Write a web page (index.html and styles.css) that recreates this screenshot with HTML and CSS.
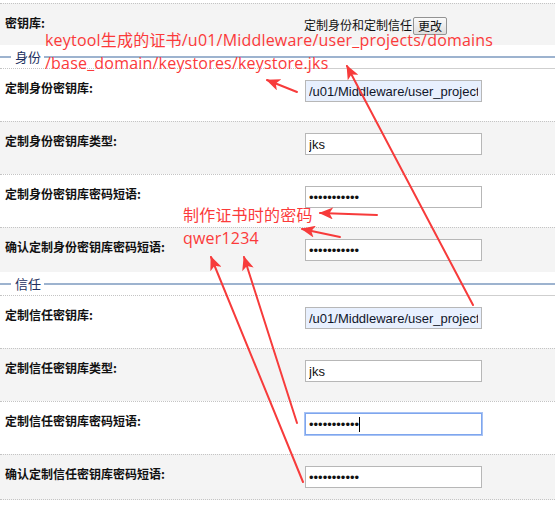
FILE: index.html
```html
<!DOCTYPE html>
<html lang="zh-CN">
<head>
<meta charset="utf-8">
<title>密钥库</title>
<link rel="stylesheet" href="styles.css">
</head>
<body>
<div class="page">
  <div class="row row-top">
    <div class="cell label">密钥库:</div>
    <div class="cell value top-value"><span class="plain">定制身份和定制信任</span><button class="btn" type="button">更改</button></div>
  </div>

  <section class="group">
    <div class="legend"><span>身份</span></div>
    <div class="row first">
      <div class="cell label">定制身份密钥库:</div>
      <div class="cell value"><input class="field filled" type="text" value="/u01/Middleware/user_projects/domains/base_domain/keystores/keystore.jks"></div>
    </div>
    <div class="row alt">
      <div class="cell label">定制身份密钥库类型:</div>
      <div class="cell value"><input class="field" type="text" value="jks"></div>
    </div>
    <div class="row">
      <div class="cell label">定制身份密钥库密码短语:</div>
      <div class="cell value"><input class="field" type="password" value="qwer1234abc"></div>
    </div>
    <div class="row alt last">
      <div class="cell label">确认定制身份密钥库密码短语:</div>
      <div class="cell value"><input class="field" type="password" value="qwer1234abc"></div>
    </div>
  </section>

  <section class="group">
    <div class="legend"><span>信任</span></div>
    <div class="row first">
      <div class="cell label">定制信任密钥库:</div>
      <div class="cell value"><input class="field filled" type="text" value="/u01/Middleware/user_projects/domains/base_domain/keystores/keystore.jks"></div>
    </div>
    <div class="row alt">
      <div class="cell label">定制信任密钥库类型:</div>
      <div class="cell value"><input class="field" type="text" value="jks"></div>
    </div>
    <div class="row">
      <div class="cell label">定制信任密钥库密码短语:</div>
      <div class="cell value"><div class="focus-wrap"><input class="field focused" type="password" value="qwer1234abc"><span class="caret"></span></div></div>
    </div>
    <div class="row alt last bottom">
      <div class="cell label">确认定制信任密钥库密码短语:</div>
      <div class="cell value"><input class="field" type="password" value="qwer1234abc"></div>
    </div>
  </section>

  <div class="note note-path">keytool生成的证书/u01/Middleware/user_projects/domains<br>/base_domain/keystores/keystore.jks</div>
  <div class="note note-pass">制作证书时的密码<br>qwer1234</div>

  <svg class="arrows" width="555" height="506" viewBox="0 0 555 506" aria-hidden="true">
    <defs>
      <marker id="head" viewBox="0 0 14 12" refX="13" refY="6" markerWidth="14" markerHeight="12" markerUnits="userSpaceOnUse" orient="auto">
        <path d="M0,0 L14,6 L0,12 L3.5,6 Z" fill="#f73b3b"/>
      </marker>
    </defs>
    <g stroke="#f73b3b" stroke-width="2" stroke-linecap="round" fill="none">
      <line x1="473" y1="305" x2="347" y2="66" marker-end="url(#head)"/>
      <line x1="297" y1="92" x2="267" y2="80" marker-end="url(#head)"/>
      <line x1="377" y1="215" x2="320" y2="213" marker-end="url(#head)"/>
      <line x1="340" y1="237" x2="302" y2="229" marker-end="url(#head)"/>
      <line x1="303" y1="482" x2="211" y2="257" marker-end="url(#head)"/>
      <line x1="297" y1="423" x2="244" y2="257" marker-end="url(#head)"/>
    </g>
  </svg>
</div>
</body>
</html>
```
FILE: styles.css
```css
html, body {
  margin: 0;
  padding: 0;
  background: #ffffff;
}

body {
  font-family: "Noto Sans CJK SC", "Liberation Sans", sans-serif;
  font-size: 12px;
  color: #111111;
}

.page {
  position: relative;
  width: 555px;
  height: 506px;
  padding-top: 3px;
  box-sizing: border-box;
  overflow: hidden;
}

.row {
  display: grid;
  grid-template-columns: 300px 1fr;
}

.row.alt {
  background: #f4f4f4;
}

.cell {
  border-top: 1px dotted #c4c4c4;
  padding: 11px 0 19px 0;
}

.row.last .cell {
  padding-bottom: 11px;
}

.row.bottom .cell {
  border-bottom: 1px dotted #c4c4c4;
}

.row.first .value {
  border-top-style: solid;
  border-top-color: #cfcfcf;
}

.label {
  padding-left: 5px;
  font-weight: bold;
  line-height: 16px;
  white-space: nowrap;
}

.value {
  padding-left: 5px;
  height: 22px;
}

.row-top {
  background: #f4f4f4;
}

.row-top .cell {
  padding-top: 11px;
  padding-bottom: 0;
  height: 30px;
}

.top-value {
  display: flex;
  align-items: flex-start;
  padding-left: 4px;
}

.top-value .plain {
  line-height: 16px;
  margin-top: 2px;
  font-weight: normal;
}

.btn {
  margin: 2px 0 0 1px;
  height: 18px;
  width: 34px;
  padding: 0;
  font-family: "Noto Sans CJK SC", sans-serif;
  font-size: 12px;
  line-height: 14px;
  color: #111;
  border: 1px solid #939393;
  border-radius: 2px;
  background: linear-gradient(#fafafa, #dedede);
}

.legend {
  display: flex;
  align-items: center;
  height: 14px;
  margin: 5px 0 4px;
}

.legend::before,
.legend::after {
  content: "";
  height: 2px;
  background: #9db3cf;
}

.legend::before {
  width: 11px;
}

.legend::after {
  flex: 1;
}

.legend span {
  padding: 0 3px 0 4px;
  font-size: 13px;
  line-height: 14px;
  color: #1b2f5e;
}

.field {
  box-sizing: border-box;
  width: 177px;
  height: 22px;
  margin: 0;
  padding: 0 3px;
  border: 1px solid #b7b7b7;
  border-radius: 0;
  background: #ffffff;
  font-family: "Liberation Sans", Arial, sans-serif;
  font-size: 13px;
  color: #111;
  outline: none;
}

.field.filled {
  background: #e8f0fe;
  color: #10162a;
}

.focus-wrap {
  position: relative;
  width: 177px;
  height: 22px;
}

.field.focused {
  border: 1px solid #7ea6ee;
  box-shadow: 0 0 0 1px #a8c3f4;
}

.caret {
  position: absolute;
  left: 54px;
  top: 4px;
  width: 1px;
  height: 15px;
  background: #000;
}

.note {
  position: absolute;
  font-family: "Open Sans", "Noto Sans CJK SC", sans-serif;
  font-size: 16px;
  letter-spacing: 0.2px;
  color: #fb3a3a;
  white-space: nowrap;
}

.note-path {
  left: 45px;
  top: 29px;
  line-height: 23px;
}

.note-pass {
  left: 183px;
  top: 204px;
  line-height: 23px;
}

.arrows {
  position: absolute;
  left: 0;
  top: 0;
  pointer-events: none;
}
```
